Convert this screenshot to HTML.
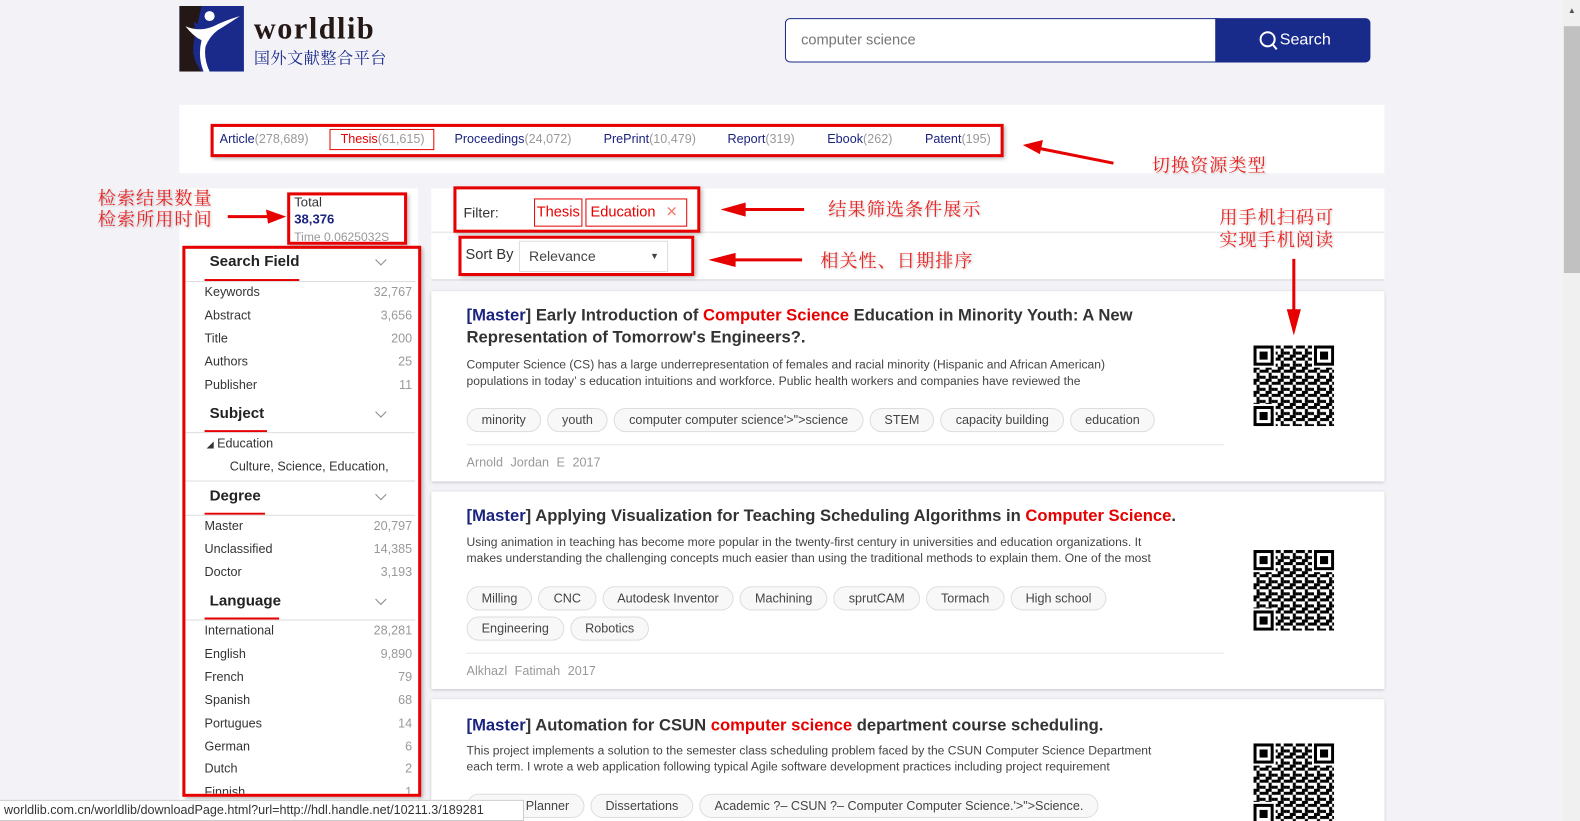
<!DOCTYPE html>
<html><head><meta charset="utf-8">
<style>
*{margin:0;padding:0;box-sizing:border-box}
html,body{width:1580px;height:821px;overflow:hidden;background:#f2f2f7}
body{font-family:"Liberation Sans","Noto Sans CJK SC",sans-serif;color:#333;position:relative}
#w{position:absolute;left:0;top:0;width:1568px;height:815px;transform:scale(1.00765,1.00736);transform-origin:0 0}
.a{position:absolute}
.red{color:#e60000}
.cn{font-family:"Noto Serif CJK SC","Noto Sans CJK SC",serif;color:#ee2020;font-size:18px;text-shadow:1px 1px 2px rgba(0,0,0,.25);letter-spacing:1px;z-index:5}
.rb{position:absolute;border:3px solid #e60000;box-shadow:2px 2px 4px rgba(0,0,0,.3);z-index:4}
.tab{position:absolute;top:131px;font-size:12.5px;color:#1a237e}
.tab span{color:#999}
.side .row{position:absolute;left:203px;width:206px;font-size:12.5px;color:#333}
.side .row span{position:absolute;right:0;color:#999}
.side h4{position:absolute;left:208px;font-size:15px;color:#222}
.side .ul{position:absolute;height:2px;background:#e60000;left:203px}
.side .ln{position:absolute;left:183px;width:229px;height:1px;background:#ddd}
.chev{position:absolute;left:374px;width:8px;height:8px;border-right:1px solid #888;border-bottom:1px solid #888;transform:rotate(45deg)}
.card{position:absolute;left:428px;width:946px;background:#fff;box-shadow:0 1px 3px rgba(0,0,0,.25)}
.card h3{position:absolute;left:35px;font-size:16.5px;color:#333;line-height:22px;width:720px}
.card h3 b.m{color:#1a237e;font-weight:bold}
.card p{position:absolute;left:35px;width:690px;font-size:12px;line-height:16px;color:#444}
.tags{position:absolute;left:35px;width:770px;display:flex;flex-wrap:wrap;gap:6px 6px}
.tag{height:24px;border:1px solid #ddd;border-radius:12px;background:#f8f8f8;font-size:12.5px;line-height:22px;padding:0 14px;color:#444;white-space:nowrap}
.foot{position:absolute;left:35px;font-size:12.5px;color:#999;word-spacing:4px}
.hr{position:absolute;left:35px;width:752px;height:1px;background:#e6e6e6}
.ov{z-index:6}
</style></head><body><div id="w">

<div class="a" style="left:178px;top:6px;width:64px;height:65px;background:#1a2a8a;overflow:hidden">
<svg width="64" height="65" viewBox="0 0 64 65"><rect width="64" height="65" fill="#1a2a8a"/><path d="M0 0 L10 0 Q18 20 14 38 Q12 52 22 65 L0 65 Z" fill="#231815"/><path d="M10 0 L22 0 L18 18 L12 14 Z" fill="#231815"/><circle cx="30" cy="10" r="5" fill="#fff"/><path d="M6 20 Q20 26 34 20 Q46 14 60 10 Q48 18 38 24 Q30 30 26 40 Q24 52 30 65 L24 65 Q18 50 22 34 Q14 30 6 20 Z" fill="#fff"/></svg></div>
<div class="a" style="left:252px;top:12px;font-family:'Liberation Serif',serif;font-weight:bold;font-size:30px;color:#231815;letter-spacing:1.5px">worldlib</div>
<div class="a" style="left:252px;top:45px;font-family:'Noto Serif CJK SC',serif;font-size:16px;color:#1a2a8a;letter-spacing:0.5px">国外文献整合平台</div>

<div class="a" style="left:779px;top:18px;width:430px;height:44px;border:1px solid #1a2a8a;border-radius:5px 0 0 5px;background:#fff"></div>
<div class="a" style="left:795px;top:32px;font-size:14.5px;color:#777">computer science</div>
<div class="a" style="left:1206px;top:18px;width:154px;height:44px;background:#182a8a;border-radius:0 5px 5px 0;color:#fff;font-size:16px;line-height:44px;padding-left:44px">
<svg class="a" style="left:43px;top:12px" width="20" height="21" viewBox="0 0 20 21"><circle cx="9" cy="9" r="7" fill="none" stroke="#fff" stroke-width="2"/><path d="M14 14 L18 19" stroke="#fff" stroke-width="2"/></svg><span style="margin-left:20px">Search</span></div>

<div class="a" style="left:1551px;top:0;width:17px;height:821px;background:#f0f0f0"></div>
<div class="a" style="left:1552px;top:26px;width:16px;height:245px;background:#c1c1c1"></div>
<div class="a" style="left:1556px;top:6px;font-size:8px;color:#555">▲</div>

<div class="a" style="left:178px;top:104px;width:1196px;height:68px;background:#fff"></div>
<div class="rb" style="left:209px;top:123px;width:787px;height:33px"></div>
<div class="tab" style="left:218px">Article<span>(278,689)</span></div>
<div class="a" style="left:327px;top:128px;width:104px;height:21px;border:1px solid #e60000"></div>
<div class="tab" style="left:338px;color:#e60000">Thesis<span>(61,615)</span></div>
<div class="tab" style="left:451px">Proceedings<span>(24,072)</span></div>
<div class="tab" style="left:599px">PrePrint<span>(10,479)</span></div>
<div class="tab" style="left:722px">Report<span>(319)</span></div>
<div class="tab" style="left:821px">Ebook<span>(262)</span></div>
<div class="tab" style="left:918px">Patent<span>(195)</span></div>
<svg class="a ov" style="left:1010px;top:135px" width="100" height="35"><path d="M95 27 L20 12" stroke="#e60000" stroke-width="3"/><path d="M5 9 L25 4 L22 18 Z" fill="#e60000"/></svg>
<div class="a cn" style="left:1143px;top:150px">切换资源类型</div>

<div class="a" style="left:178px;top:187px;width:237px;height:610px;background:#fff"></div>
<div class="a cn" style="left:97px;top:186px;line-height:21px">检索结果数量<br>检索所用时间</div>
<svg class="a ov" style="left:224px;top:205px" width="65" height="20"><path d="M2 10 L45 10" stroke="#e60000" stroke-width="3"/><path d="M60 10 L40 3 L42 17 Z" fill="#e60000"/></svg>
<div class="rb" style="left:285px;top:191px;width:119px;height:52px"></div>
<div class="a" style="left:292px;top:193px;font-size:13px;color:#333">Total</div>
<div class="a" style="left:292px;top:210px;font-size:13px;font-weight:bold;color:#1a237e">38,376</div>
<div class="a" style="left:292px;top:228px;font-size:12px;color:#999;height:12px;overflow:hidden">Time 0.0625032S</div>

<div class="side">
<div class="rb" style="left:181px;top:244px;width:237px;height:547px"></div>
<h4 style="top:251px">Search Field</h4><div class="chev" style="top:254px"></div>
<div class="ul" style="top:277px;width:94px"></div><div class="ln" style="top:279px"></div>
<div class="row" style="top:283px">Keywords<span>32,767</span></div>
<div class="row" style="top:306px">Abstract<span>3,656</span></div>
<div class="row" style="top:329px">Title<span>200</span></div>
<div class="row" style="top:352px">Authors<span>25</span></div>
<div class="row" style="top:375px">Publisher<span>11</span></div>
<h4 style="top:402px">Subject</h4><div class="chev" style="top:405px"></div>
<div class="ul" style="top:427px;width:62px"></div><div class="ln" style="top:429px"></div>
<div class="row" style="top:433px;left:205px"><span style="position:static;font-size:7px;color:#333">◢</span> Education</div>
<div class="row" style="top:456px;left:228px">Culture, Science, Education,</div>
<div class="ln" style="top:477px"></div>
<h4 style="top:484px">Degree</h4><div class="chev" style="top:487px"></div>
<div class="ul" style="top:509px;width:60px"></div><div class="ln" style="top:511px"></div>
<div class="row" style="top:515px">Master<span>20,797</span></div>
<div class="row" style="top:538px">Unclassified<span>14,385</span></div>
<div class="row" style="top:561px">Doctor<span>3,193</span></div>
<h4 style="top:588px">Language</h4><div class="chev" style="top:591px"></div>
<div class="ul" style="top:613px;width:74px"></div><div class="ln" style="top:615px"></div>
<div class="row" style="top:619px">International<span>28,281</span></div>
<div class="row" style="top:642px">English<span>9,890</span></div>
<div class="row" style="top:665px">French<span>79</span></div>
<div class="row" style="top:688px">Spanish<span>68</span></div>
<div class="row" style="top:711px">Portugues<span>14</span></div>
<div class="row" style="top:734px">German<span>6</span></div>
<div class="row" style="top:756px">Dutch<span>2</span></div>
<div class="row" style="top:779px;height:9px;overflow:hidden">Finnish<span>1</span></div>
</div>

<div class="a" style="left:428px;top:187px;width:946px;height:90px;background:#fff"></div>
<div class="a" style="left:428px;top:230px;width:946px;height:1px;background:#e0e0e0"></div>
<div class="a" style="left:428px;top:277px;width:946px;height:2px;background:#e4e4ea"></div>
<div class="rb" style="left:450px;top:185px;width:245px;height:46px"></div>
<div class="a" style="left:460px;top:203px;font-size:14px;color:#333">Filter:</div>
<div class="a" style="left:530px;top:197px;width:48px;height:28px;border:1px solid #e60000;color:#e60000;font-size:14.5px;line-height:26px;text-align:center">Thesis</div>
<div class="a" style="left:581px;top:197px;width:101px;height:28px;border:1px solid #e60000;color:#e60000;font-size:14.5px;line-height:26px;padding-left:4px">Education <span style="color:#f08070;margin-left:6px">✕</span></div>
<div class="rb" style="left:455px;top:234px;width:234px;height:40px"></div>
<div class="a" style="left:462px;top:245px;font-size:14.5px;color:#333">Sort By</div>
<div class="a" style="left:515px;top:239px;width:148px;height:31px;border:1px solid #ddd;background:#fff;font-size:14px;color:#444;line-height:29px;padding-left:9px">Relevance<span style="position:absolute;right:8px;font-size:9px">▼</span></div>
<svg class="a ov" style="left:710px;top:198px" width="90" height="20"><path d="M88 10 L25 10" stroke="#e60000" stroke-width="3"/><path d="M5 10 L30 3 L30 17 Z" fill="#e60000"/></svg>
<div class="a cn" style="left:822px;top:194px">结果筛选条件展示</div>
<svg class="a ov" style="left:700px;top:248px" width="100" height="20"><path d="M96 10 L25 10" stroke="#e60000" stroke-width="3"/><path d="M3 10 L30 3 L30 17 Z" fill="#e60000"/></svg>
<div class="a cn" style="left:814px;top:245px">相关性、日期排序</div>
<div class="a cn" style="left:1210px;top:204px;line-height:22px">用手机扫码可<br>实现手机阅读</div>
<svg class="a ov" style="left:1276px;top:255px" width="20" height="80"><path d="M8 2 L8 60" stroke="#e60000" stroke-width="3"/><path d="M8 78 L1 52 L15 52 Z" fill="#e60000"/></svg>

<svg width="0" height="0" style="position:absolute"><defs>
<pattern id="qp" width="12" height="12" patternUnits="userSpaceOnUse"><rect x="0" y="0" width="3" height="3"/><rect x="6" y="0" width="6" height="3"/><rect x="3" y="3" width="3" height="6"/><rect x="9" y="6" width="3" height="3"/><rect x="0" y="9" width="6" height="3"/><rect x="6" y="6" width="3" height="3"/></pattern>
<g id="qr"><rect x="0" y="0" width="80" height="80" fill="url(#qp)"/><rect x="0" y="0" width="22" height="22" fill="#fff"/><rect x="58" y="0" width="22" height="22" fill="#fff"/><rect x="0" y="58" width="22" height="22" fill="#fff"/>
<g fill="none" stroke="#000" stroke-width="3"><rect x="1.5" y="1.5" width="17" height="17"/><rect x="61.5" y="1.5" width="17" height="17"/><rect x="1.5" y="61.5" width="17" height="17"/></g>
<rect x="6" y="6" width="8" height="8"/><rect x="66" y="6" width="8" height="8"/><rect x="6" y="66" width="8" height="8"/></g></defs></svg>

<div class="card" style="top:289px;height:189px">
<h3 style="top:13px"><b class="m">[Master</b>] Early Introduction of <span class="red">Computer Science</span> Education in Minority Youth: A New Representation of Tomorrow's Engineers?.</h3>
<p style="top:65px">Computer Science (CS) has a large underrepresentation of females and racial minority (Hispanic and African American) populations in today’ s education intuitions and workforce. Public health workers and companies have reviewed the</p>
<div class="tags" style="top:116px"><div class="tag">minority</div><div class="tag">youth</div><div class="tag">computer computer science'&gt;"&gt;science</div><div class="tag">STEM</div><div class="tag">capacity building</div><div class="tag">education</div></div>
<div class="hr" style="top:152px"></div>
<div class="foot" style="top:163px">Arnold Jordan E 2017</div>
<svg class="a" style="left:816px;top:54px" width="80" height="80"><use href="#qr"/></svg>
</div>

<div class="card" style="top:488px;height:196px">
<h3 style="top:13px;width:800px"><b class="m">[Master</b>] Applying Visualization for Teaching Scheduling Algorithms in <span class="red">Computer Science</span>.</h3>
<p style="top:42px">Using animation in teaching has become more popular in the twenty-first century in universities and education organizations. It makes understanding the challenging concepts much easier than using the traditional methods to explain them. One of the most</p>
<div class="tags" style="top:94px"><div class="tag">Milling</div><div class="tag">CNC</div><div class="tag">Autodesk Inventor</div><div class="tag">Machining</div><div class="tag">sprutCAM</div><div class="tag">Tormach</div><div class="tag">High school</div></div>
<div class="tags" style="top:124px"><div class="tag">Engineering</div><div class="tag">Robotics</div></div>
<div class="hr" style="top:160px"></div>
<div class="foot" style="top:171px">Alkhazl Fatimah 2017</div>
<svg class="a" style="left:816px;top:58px" width="80" height="80"><use href="#qr"/></svg>
</div>

<div class="card" style="top:694px;height:140px">
<h3 style="top:15px;width:800px"><b class="m">[Master</b>] Automation for CSUN <span class="red">computer science</span> department course scheduling.</h3>
<p style="top:43px">This project implements a solution to the semester class scheduling problem faced by the CSUN Computer Science Department each term. I wrote a web application following typical Agile software development practices including project requirement</p>
<div class="tags" style="top:94px"><div class="tag">Course Planner</div><div class="tag">Dissertations</div><div class="tag">Academic ?– CSUN ?– Computer Computer Science.'&gt;"&gt;Science.</div></div>
<svg class="a" style="left:816px;top:44px" width="80" height="80"><use href="#qr"/></svg>
</div>

<div class="a" style="left:0;top:794px;width:520px;height:21px;background:#fff;border:1px solid #ccc;border-left:none;font-size:12.5px;color:#333;line-height:19px;padding-left:4px;white-space:nowrap;overflow:hidden;z-index:7">worldlib.com.cn/worldlib/downloadPage.html?url=http://hdl.handle.net/10211.3/189281</div>
</div></body></html>
